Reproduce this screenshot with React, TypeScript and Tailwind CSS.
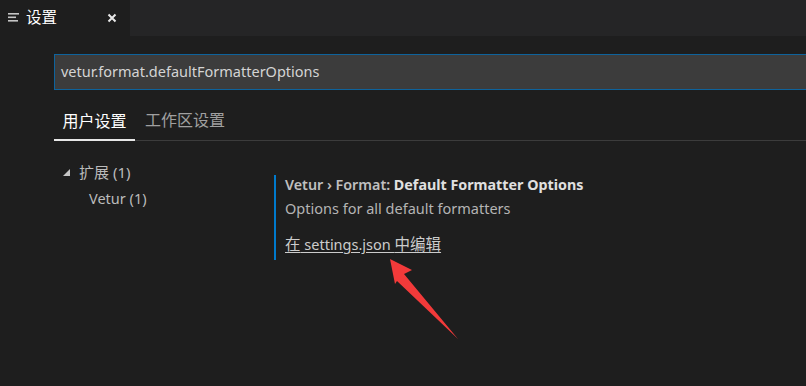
import React from 'react';

const font = { fontFamily: '"Noto Sans", "Noto Sans CJK SC", sans-serif' };

function TabIcon() {
  return (
    <svg width="12" height="12" viewBox="0 0 12 12" className="shrink-0">
      <rect x="0" y="1" width="11" height="1.6" fill="#c5c5c5" />
      <rect x="0" y="4.5" width="8" height="1.6" fill="#c5c5c5" />
      <rect x="0" y="8" width="10" height="1.6" fill="#c5c5c5" />
    </svg>
  );
}

function CloseIcon() {
  return (
    <svg width="10" height="10" viewBox="0 0 10 10">
      <path d="M1.5 1.5 L8.5 8.5 M8.5 1.5 L1.5 8.5" stroke="#e8e8e8" strokeWidth="2" />
    </svg>
  );
}

export default function App() {
  return (
    <div className="w-[806px] h-[386px] bg-[#1e1e1e] text-[#cccccc] overflow-hidden relative" style={font}>
      {/* tab strip */}
      <div className="h-[36px] bg-[#252526] flex">
        <div className="w-[130px] h-full bg-[#1e1e1e] flex items-center pl-[8px] pr-[12px]">
          <TabIcon />
          <span className="ml-[6px] text-[15.5px] text-white leading-none">设置</span>
          <span className="ml-auto mr-[1px] flex items-center"><CloseIcon /></span>
        </div>
      </div>

      {/* search */}
      <div className="pl-[54px] pt-[18px]">
        <div className="h-[36px] bg-[#3c3c3c] border-y border-l border-[#0e639c] flex items-center pl-[6px]">
          <span className="text-[14.5px] text-[#d4d4d4]">vetur.format.defaultFormatterOptions</span>
        </div>
      </div>

      {/* scope tabs */}
      <div className="pl-[54px] mt-[19px]">
        <div className="flex items-end border-b border-[#3c3c3c] h-[32px]">
          <div className="w-[81px] h-full flex items-start justify-center border-b-2 border-[#e7e7e7] -mb-[1px]">
            <span className="text-[16px] text-white leading-[22px]">用户设置</span>
          </div>
          <div className="h-full pl-[10px] flex items-start">
            <span className="text-[16px] text-[#a0a0a0] leading-[22px]">工作区设置</span>
          </div>
        </div>
      </div>

      {/* body */}
      <div className="flex pt-[20px]">
        <div className="w-[220px] pl-[63px] shrink-0">
          <div className="flex items-center h-[22px]">
            <svg width="7" height="7" viewBox="0 0 7 7" className="mr-[9px]">
              <path d="M7 0 L7 7 L0 7 Z" fill="#c5c5c5" />
            </svg>
            <span className="text-[15px] text-[#bbbbbb]">扩展 (1)</span>
          </div>
          <div className="h-[22px] mt-[5px] pl-[26px] flex items-center">
            <span className="text-[14.5px] text-[#bbbbbb]">Vetur (1)</span>
          </div>
        </div>

        <div className="ml-[54px] mt-[14px] border-l-2 border-[#007acc] h-[85px] pl-[9px] flex flex-col">
          <div className="text-[14.3px] leading-[20px] mt-[0px] text-[#cccccc]">
            <span className="font-semibold text-[#c0c0c0]">Vetur › Format: </span>
            <span className="font-bold text-[#e0e0e0]">Default Formatter Options</span>
          </div>
          <div className="text-[14.5px] leading-[20px] mt-[3px] text-[#b4b4b4]">Options for all default formatters</div>
          <div className="text-[14.5px] leading-[20px] mt-[16px] text-[#cccccc] underline underline-offset-2">
            <span className="text-[15.5px]">在</span> settings.json <span className="text-[15.5px]">中编辑</span>
          </div>
        </div>
      </div>

      {/* annotation arrow */}
      <svg className="absolute left-0 top-0 pointer-events-none" width="806" height="386">
        <path d="M390 259 L412 270 L404 274 L458 339 L397 281 L395 284 Z" fill="#f23a3a" />
      </svg>
    </div>
  );
}
